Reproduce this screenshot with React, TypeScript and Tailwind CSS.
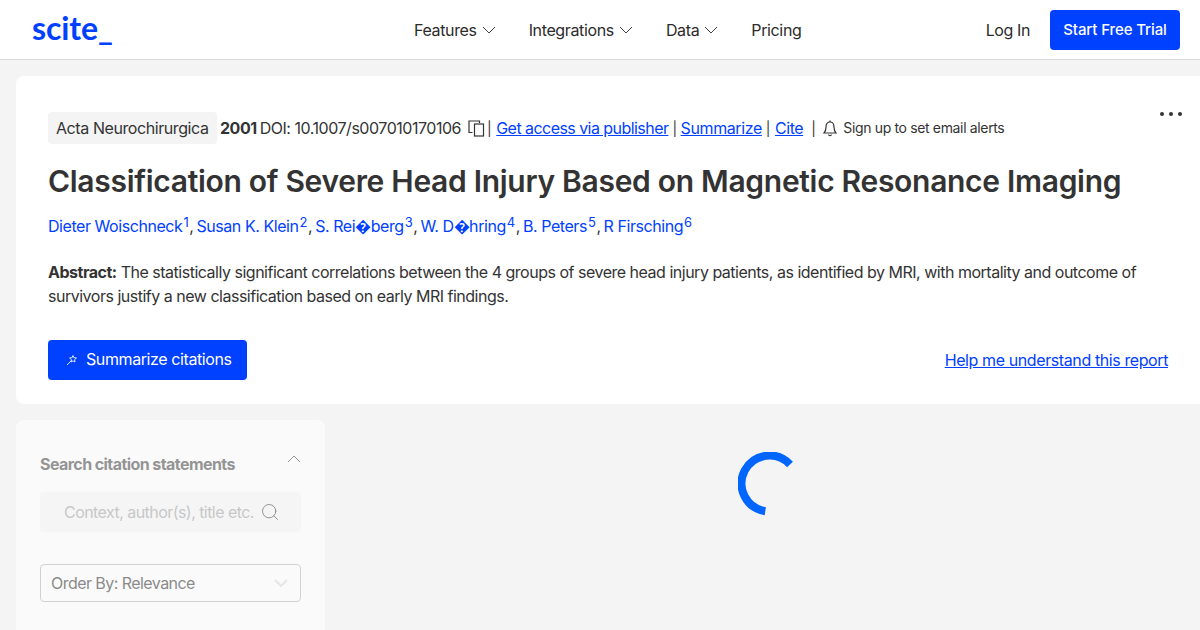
import React from "react";
import { Search } from "lucide-react";

const F = "font-['Inter','Liberation_Sans',sans-serif]";

function Chev({ up = false, thick = false, className = "" }: { up?: boolean; thick?: boolean; className?: string }) {
  return (
    <svg width="14" height="8" viewBox="0 0 14 8" fill="none" stroke="currentColor" strokeWidth={thick ? 2 : 1} className={className}>
      <path d={up ? "M1 7 L7 1 L13 7" : "M1 1 L7 7 L13 1"} />
    </svg>
  );
}

function NavItem({ label, chevron = true }: { label: string; chevron?: boolean }) {
  return (
    <span className="flex items-center gap-[5px] text-[16px] tracking-[-0.36px] text-[#2b2b2b]">
      {label}
      {chevron && <Chev className="text-[#444] mt-[1px]" />}
    </span>
  );
}

function Author({ name, n, last }: { name: string; n: number; last?: boolean }) {
  return (
    <span>
      <a className="text-[#0040ff]">{name}</a>
      <sup className="text-[13px] text-[#0040ff] ml-[1px] top-[-5px] align-baseline relative">{n}</sup>
      {!last && <span className="text-[#333] ml-[1px] mr-[3px]">,</span>}
    </span>
  );
}

function Sep({ className = "" }: { className?: string }) {
  return <span className={`text-[14px] ${className}`}>|</span>;
}

export default function App() {
  return (
    <div className={`${F} w-[1200px] h-[630px] overflow-hidden bg-[#f4f4f4] flex flex-col`}>
      <header className="h-[60px] shrink-0 bg-white border-b border-[#d9d9d9] flex items-center pl-[32px] pr-[20px]">
        <span className="w-[80px] text-[#0040ff] text-[32px] font-bold leading-none font-['Lato',sans-serif] tracking-[-0.1px] mt-[-3px] whitespace-nowrap">
          scite_
        </span>
        <nav className="ml-[302px] flex items-center gap-[33px]">
          <NavItem label="Features" />
          <NavItem label="Integrations" />
          <NavItem label="Data" />
          <NavItem label="Pricing" chevron={false} />
        </nav>
        <div className="ml-auto flex items-center gap-[20px]">
          <span className="text-[16px] tracking-[-0.4px] text-[#2b2b2b]">Log In</span>
          <button className="h-[40px] w-[130px] pt-[1px] rounded-[4px] bg-[#0040ff] text-white text-[15px] font-medium tracking-[-0.1px]">
            Start Free Trial
          </button>
        </div>
      </header>

      <div className="flex-1 pl-[16px] pt-[16px] flex flex-col gap-[16px]">
        <section className="relative h-[328px] shrink-0 bg-white rounded-l-[8px] px-[32px] pt-[36px]">
          <div className="flex items-center h-[32px] text-[16px] tracking-[-0.47px] text-[#333] whitespace-nowrap">
            <span className="h-[32px] w-[169px] flex items-center px-[8px] bg-[#f4f4f4] rounded-[4px] tracking-[-0.42px]">Acta Neurochirurgica</span>
            <b className="ml-[3px] font-bold">2001</b>
            <span className="ml-[3px]">DOI: 10.1007/s007010170106</span>
            <svg width="17" height="17" viewBox="0 0 17 17" fill="none" stroke="#333" strokeWidth="1.2" className="ml-[7px]">
              <path d="M4.5 12.5 H1 V1 H11.5 V3" />
              <rect x="6.5" y="4" width="9" height="12" />
            </svg>
            <Sep className="ml-[2px]" />
            <a className="ml-[5px] text-[#0040ff] underline tracking-[-0.55px]">Get access via publisher</a>
            <Sep className="ml-[4px]" />
            <a className="ml-[4px] text-[#0040ff] underline tracking-[-0.4px]">Summarize</a>
            <Sep className="ml-[4px]" />
            <a className="ml-[5px] text-[#0040ff] underline">Cite</a>
            <Sep className="ml-[8px]" />
            <svg width="14" height="17" viewBox="0 0 14 17" fill="none" stroke="#333" strokeWidth="1.2" className="ml-[8px]">
              <path d="M7 2 C4 2 3 4 3 7 C3 10 2.5 11.5 1 13 H13 C11.5 11.5 11 10 11 7 C11 4 10 2 7 2 Z" />
              <path d="M7 0.5 V2 M5.5 14.5 C5.8 16 8.2 16 8.5 14.5" />
            </svg>
            <span className="ml-[6px] mt-[-2px] text-[14px] tracking-[-0.35px]">Sign up to set email alerts</span>
          </div>
          <div className="absolute right-[18px] top-[36px] flex gap-[5px]">
            <span className="w-[4px] h-[4px] rounded-full bg-[#333]" />
            <span className="w-[4px] h-[4px] rounded-full bg-[#333]" />
            <span className="w-[4px] h-[4px] rounded-full bg-[#333]" />
          </div>
          <h1 className="mt-[16px] text-[30px] leading-[42px] font-semibold tracking-[-0.3px] text-[#333] whitespace-nowrap">
            Classification of Severe Head Injury Based on Magnetic Resonance Imaging
          </h1>
          <div className="mt-[12px] text-[16px] leading-[24px] tracking-[-0.44px] whitespace-nowrap">
            <Author name="Dieter Woischneck" n={1} />
            <Author name="Susan K. Klein" n={2} />
            <Author name="S. Rei�berg" n={3} />
            <Author name="W. D�hring" n={4} />
            <Author name="B. Peters" n={5} />
            <Author name="R Firsching" n={6} last />
          </div>
          <p className="mt-[22px] text-[16px] leading-[24px] tracking-[-0.49px] text-[#333] w-[1110px]">
            <b className="font-bold">Abstract:</b> The statistically significant correlations between the 4 groups of severe head injury patients, as identified by MRI, with mortality and outcome of survivors justify a new classification based on early MRI findings.
          </p>
          <div className="mt-[32px] flex items-center justify-between">
            <button className="h-[40px] w-[199px] pb-[2px] rounded-[4px] bg-[#0040ff] text-white text-[16px] tracking-[-0.4px] flex items-center pl-[18px] gap-[8px]">
              <svg width="12" height="12" viewBox="0 0 12 12" fill="none" stroke="#dfe6ff" strokeWidth="1" className="mt-[2px]">
                <path d="M1 11 L5.5 6.5" />
                <path d="M7 1.5 L7.8 3.6 L10.5 4 L8.6 5.6 L9 8 L7 6.9 L5 8 L5.4 5.6 L3.6 4 L6.2 3.6 Z" />
              </svg>
              Summarize citations
            </button>
            <a className="text-[#0040ff] underline text-[16px] tracking-[-0.4px]">Help me understand this report</a>
          </div>
        </section>

        <div className="flex flex-1">
          <aside className="w-[309px] shrink-0 bg-white rounded-t-[8px] opacity-60 px-[24px] pt-[32px]">
            <div className="flex justify-between items-start h-[24px]">
              <span className="text-[16px] font-bold tracking-[-0.57px] text-[#555]">Search citation statements</span>
              <Chev up className="text-[#555] mt-[3px]" />
            </div>
            <div className="mt-[16px] h-[40px] w-[261px] bg-[#f7f7f7] rounded-[4px] flex items-center pl-[24px] pr-[21px] justify-between">
              <span className="text-[16px] tracking-[-0.55px] text-[#aaa] whitespace-nowrap">Context, author(s), title etc.</span>
              <Search size={20} strokeWidth={1.1} className="text-[#444] shrink-0" />
            </div>
            <div className="mt-[32px] h-[38px] w-[261px] border border-[#bbb] rounded-[4px] flex items-center justify-between pl-[10px] pr-[12px]">
              <span className="text-[16px] tracking-[-0.55px] text-[#444]">Order By: Relevance</span>
              <Chev thick className="text-[#ddd]" />
            </div>
          </aside>
          <div className="flex-1 pt-[32px] pl-[413px]">
            <svg width="64" height="64" viewBox="0 0 64 64">
              <path d="M52 12.4 A28 28 0 1 0 27.3 59.2" fill="none" stroke="#0066ff" strokeWidth="8" />
            </svg>
          </div>
        </div>
      </div>
    </div>
  );
}
